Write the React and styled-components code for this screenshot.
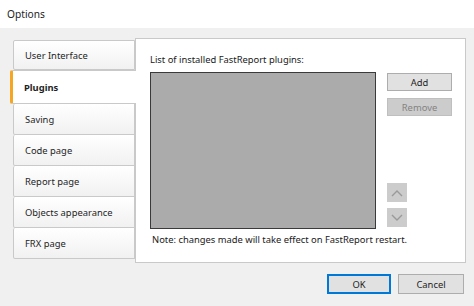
import React from 'react';
import styled, { createGlobalStyle } from 'styled-components';

const GlobalStyle = createGlobalStyle`
  html, body {
    margin: 0;
    padding: 0;
    background: #f0f0f0;
  }
  body {
    font-family: 'Noto Sans', 'Open Sans', 'Liberation Sans', sans-serif;
    font-size: 9.4px;
    color: #1a1a1a;
  }
`

const Window = styled.div`
  width: 474px;
  height: 306px;
  display: flex;
  flex-direction: column;
  background: #f0f0f0;
  overflow: hidden;
`

const TitleBar = styled.div`
  height: 28px;
  display: flex;
  align-items: center;
  padding-left: 7px;
  background: #ffffff;
  font-size: 10.2px;
  color: #222;
`

const Body = styled.div`
  display: flex;
  flex-direction: column;
  padding: 10px 8px 0 10px;
`

const Content = styled.div`
  display: flex;
  height: 225px;
`

const TabList = styled.div`
  width: 125px;
  padding-top: 2px;
  display: flex;
  flex-direction: column;
`

const Tab = styled.div`
  position: relative;
  height: ${p => (p.$active ? 34 : p.$first ? 30 : 31)}px;
  margin-left: ${p => (p.$active ? 0 : 3)}px;
  margin-right: ${p => (p.$active ? -1 : 0)}px;
  z-index: ${p => (p.$active ? 1 : 0)};
  display: flex;
  align-items: center;
  padding-left: ${p => (p.$active ? 11 : 11)}px;
  border: 1px solid #c9c9c9;
  border-right: ${p => (p.$active ? 'none' : '1px solid #c9c9c9')};
  border-left: ${p => (p.$active ? '3px solid #f5a623' : '1px solid #c9c9c9')};
  border-top: ${p => (p.$active || p.$first ? '1px solid #c9c9c9' : 'none')};
  border-radius: 2px 0 0 2px;
  background: ${p => (p.$active ? '#ffffff' : 'linear-gradient(to bottom, #ffffff, #f1f1f1)')};
  font-weight: ${p => (p.$active ? 700 : 400)};
  color: #1e1e1e;
  box-sizing: border-box;
`

const Panel = styled.div`
  flex: 1;
  background: #ffffff;
  border: 1px solid #c9c9c9;
  padding: 14px 0 0 14px;
  display: grid;
  grid-template-columns: 226px 65px;
  grid-template-rows: auto 157px auto;
  column-gap: 11px;
  align-content: start;
`

const Label = styled.div`
  grid-column: 1 / 3;
  height: 19px;
  line-height: 14px;
`

const ListBox = styled.div`
  background: #ababab;
  border: 1px solid #3a3a3a;
`

const SideButtons = styled.div`
  display: flex;
  flex-direction: column;
  justify-content: space-between;
  padding: 1px 0 2px;
`

const Stack = styled.div`
  display: flex;
  flex-direction: column;
  gap: 7px;
`

const ArrowStack = styled.div`
  display: flex;
  flex-direction: column;
  gap: 6px;
`

const Button = styled.div`
  height: 18px;
  display: flex;
  align-items: center;
  justify-content: center;
  box-sizing: border-box;
  border: 1px solid ${p => (p.$disabled ? '#bfbfbf' : '#adadad')};
  background: ${p => (p.$disabled ? '#cccccc' : '#e1e1e1')};
  color: ${p => (p.$disabled ? '#838383' : '#1e1e1e')};
`

const ArrowButton = styled.div`
  width: 20px;
  height: 19px;
  background: #cccccc;
  display: flex;
  align-items: center;
  justify-content: center;
`

const Note = styled.div`
  grid-column: 1 / 3;
  padding-top: 4px;
  padding-left: 2px;
  line-height: 14px;
`

const Footer = styled.div`
  display: flex;
  justify-content: flex-end;
  gap: 7px;
  margin-top: 11px;
  padding-right: 2px;
`

const DialogButton = styled.div`
  width: ${p => p.$w}px;
  height: 20px;
  box-sizing: border-box;
  display: flex;
  align-items: center;
  justify-content: center;
  background: #e1e1e1;
  border: ${p => (p.$default ? '2px solid #0078d7' : '1px solid #adadad')};
  color: #1e1e1e;
`

const Chevron = ({ up }) => (
  <svg width="12" height="8" viewBox="0 0 12 8">
    <path
      d={up ? 'M1 7 L6 2 L11 7' : 'M1 1 L6 6 L11 1'}
      fill="none"
      stroke="#9a9a9a"
      strokeWidth="1.4"
    />
  </svg>
)

const tabs = ['User Interface', 'Plugins', 'Saving', 'Code page', 'Report page', 'Objects appearance', 'FRX page']

export default function App() {
  return (
    <Window>
      <GlobalStyle />
      <TitleBar>Options</TitleBar>
      <Body>
        <Content>
          <TabList>
            {tabs.map((t, i) => (
              <Tab key={t} $active={t === 'Plugins'} $first={i === 0}>{t}</Tab>
            ))}
          </TabList>
          <Panel>
            <Label>List of installed FastReport plugins:</Label>
            <ListBox />
            <SideButtons>
              <Stack>
                <Button>Add</Button>
                <Button $disabled>Remove</Button>
              </Stack>
              <ArrowStack>
                <ArrowButton><Chevron up /></ArrowButton>
                <ArrowButton><Chevron /></ArrowButton>
              </ArrowStack>
            </SideButtons>
            <Note>Note: changes made will take effect on FastReport restart.</Note>
          </Panel>
        </Content>
        <Footer>
          <DialogButton $w={64} $default>OK</DialogButton>
          <DialogButton $w={66}>Cancel</DialogButton>
        </Footer>
      </Body>
    </Window>
  )
}
